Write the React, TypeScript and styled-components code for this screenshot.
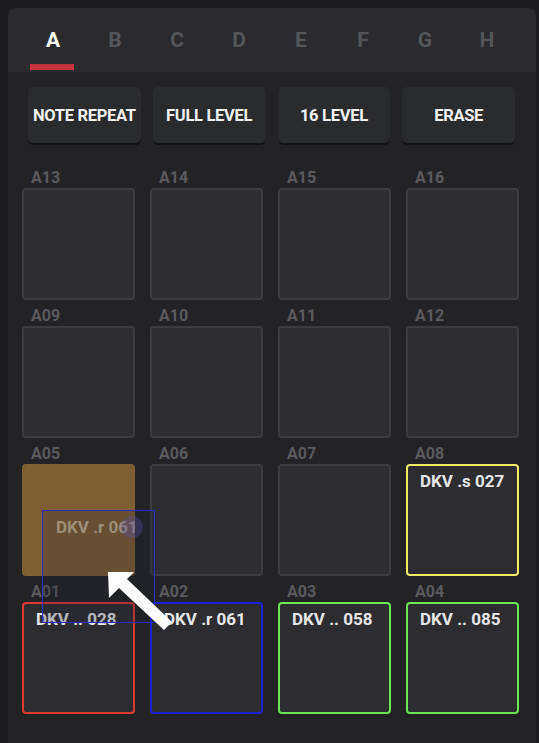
import React from "react";
import styled, { createGlobalStyle } from "styled-components";

const Global = createGlobalStyle`
  html, body { margin: 0; padding: 0; background: #1c1c1e; }
  body { font-family: Roboto, "Liberation Sans", sans-serif; overflow: hidden; }
  * { box-sizing: border-box; }
`;

const Screen = styled.div`
  width: 539px;
  height: 743px;
  padding: 8px 3px 0 8px;
  background: #1c1c1e;
  overflow: hidden;
`;

const Panel = styled.div`
  height: 100%;
  border-radius: 8px 8px 0 0;
  background: #232325;
  overflow: hidden;
`;

const TabBar = styled.div`
  display: flex;
  height: 64px;
  padding-left: 14px;
  background: #2b2b2f;
`;

const Tab = styled.div<{ $active?: boolean }>`
  position: relative;
  width: 62px;
  display: flex;
  align-items: center;
  justify-content: center;
  font-size: 21px;
  font-weight: 700;
  color: ${(p) => (p.$active ? "#ffffff" : "#55565a")};
  &::after {
    content: "";
    display: ${(p) => (p.$active ? "block" : "none")};
    position: absolute;
    left: 8px;
    width: 44px;
    bottom: 2px;
    height: 6px;
    background: #c8323f;
  }
`;

const Body = styled.div`
  padding: 15px 17px 0 14px;
`;

const ButtonRow = styled.div`
  display: grid;
  grid-template-columns: repeat(4, 1fr);
  gap: 12px;
  margin: 0 4px 0 6px;
`;

const ActionButton = styled.div`
  height: 56px;
  border-radius: 5px;
  background: #2a2b2d;
  box-shadow: 0 2px 0 #121213;
  display: flex;
  align-items: center;
  justify-content: center;
  color: #f2f2f2;
  font-size: 16.5px;
  font-weight: 700;
  letter-spacing: -0.3px;
  white-space: nowrap;
`;

const Grid = styled.div`
  position: relative;
  margin-top: 25px;
  display: grid;
  grid-template-columns: repeat(4, 113px);
  column-gap: 15px;
  row-gap: 6px;
`;

const Cell = styled.div`
  display: flex;
  flex-direction: column;
`;

const PadLabel = styled.div`
  height: 20px;
  line-height: 20px;
  padding-left: 9px;
  font-size: 16px;
  font-weight: 700;
  color: #5a5a5e;
`;

type Tone = "empty" | "orange" | "yellow" | "green" | "red" | "blue";

const borderFor: Record<Tone, string> = {
  empty: "#3c3c40",
  orange: "#7d5f33",
  yellow: "#f3ec62",
  green: "#6fe25a",
  red: "#dd3b34",
  blue: "#1c20d6",
};

const Pad = styled.div<{ $tone: Tone }>`
  height: 112px;
  border-radius: 4px;
  border: 2px solid ${(p) => borderFor[p.$tone]};
  background: ${(p) => (p.$tone === "orange" ? "#7d5f33" : "#2d2d31")};
  padding: 5px 0 0 12px;
  color: #e6e6e8;
  font-size: 17px;
  font-weight: 700;
  line-height: 21px;
  white-space: nowrap;
`;

const Ghost = styled.div`
  position: absolute;
  left: 20px;
  top: 342px;
  width: 113px;
  height: 113px;
  border: 1px solid #2a2cc4;
  background: rgba(30, 30, 50, 0.24);
  padding: 6px 0 0 13px;
  color: rgba(205, 198, 185, 0.55);
  font-size: 17px;
  font-weight: 700;
  line-height: 21px;
  white-space: nowrap;
  pointer-events: none;
`;

const Touch = styled.div`
  position: absolute;
  left: 78px;
  top: 5px;
  width: 22px;
  height: 22px;
  border-radius: 50%;
  background: rgba(90, 80, 170, 0.35);
`;

const Arrow = styled.svg`
  position: absolute;
  left: 0;
  top: 0;
  width: 497px;
  height: 546px;
  pointer-events: none;
  overflow: visible;
`;

const tabs = ["A", "B", "C", "D", "E", "F", "G", "H"];
const buttons = ["NOTE REPEAT", "FULL LEVEL", "16 LEVEL", "ERASE"];

const pads: { id: string; tone: Tone; name?: string }[] = [
  { id: "A13", tone: "empty" },
  { id: "A14", tone: "empty" },
  { id: "A15", tone: "empty" },
  { id: "A16", tone: "empty" },
  { id: "A09", tone: "empty" },
  { id: "A10", tone: "empty" },
  { id: "A11", tone: "empty" },
  { id: "A12", tone: "empty" },
  { id: "A05", tone: "orange" },
  { id: "A06", tone: "empty" },
  { id: "A07", tone: "empty" },
  { id: "A08", tone: "yellow", name: "DKV .s 027" },
  { id: "A01", tone: "red", name: "DKV .. 028" },
  { id: "A02", tone: "blue", name: "DKV .r 061" },
  { id: "A03", tone: "green", name: "DKV .. 058" },
  { id: "A04", tone: "green", name: "DKV .. 085" },
];

export default function App() {
  return (
    <Screen>
      <Global />
      <Panel>
        <TabBar>
          {tabs.map((t, i) => (
            <Tab key={t} $active={i === 0}>
              {t}
            </Tab>
          ))}
        </TabBar>
        <Body>
          <ButtonRow>
            {buttons.map((b) => (
              <ActionButton key={b}>{b}</ActionButton>
            ))}
          </ButtonRow>
          <Grid>
            {pads.map((p) => (
              <Cell key={p.id}>
                <PadLabel>{p.id}</PadLabel>
                <Pad $tone={p.tone}>{p.name}</Pad>
              </Cell>
            ))}
            <Ghost>
              <Touch />
              DKV .r 061
            </Ghost>
            <Arrow viewBox="0 0 497 546">
              <g transform="translate(-22,-168)">
                <polygon
                  points="108,572 134,572 127,579 172,622 164,630 119,588 109,598"
                  fill="#ffffff"
                />
              </g>
            </Arrow>
          </Grid>
        </Body>
      </Panel>
    </Screen>
  );
}
